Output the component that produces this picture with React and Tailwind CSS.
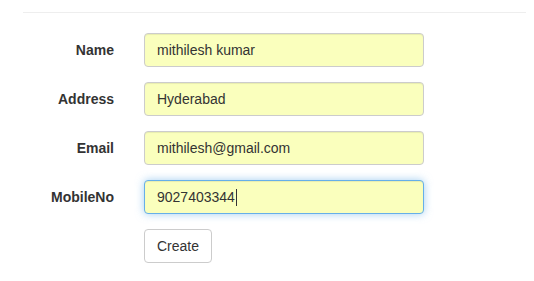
export default function App() {
  const fields = [
    { label: "Name", value: "mithilesh kumar" },
    { label: "Address", value: "Hyderabad" },
    { label: "Email", value: "mithilesh@gmail.com" },
  ];

  return (
    <div
      className="w-[534px] h-[281px] bg-white text-[14px] text-[#333] overflow-hidden"
      style={{ fontFamily: '"Liberation Sans", Arial, sans-serif' }}
    >
      <div className="pt-[12px] pl-[23px] pr-[8px]">
        <div className="border-t border-[#eee]" />
      </div>

      <form className="pt-[20px]">
        {fields.map((f) => (
          <div key={f.label} className="flex mb-[15px]">
            <label className="w-[114px] text-right font-bold pt-[7px] leading-[20px]">
              {f.label}
            </label>
            <div className="ml-[30px] w-[280px] h-[34px] rounded-[4px] border border-[#ccc] bg-[#faffbd] shadow-[inset_0_1px_1px_rgba(0,0,0,0.075)] px-[12px] py-[6px] leading-[20px] text-[#333]">
              {f.value}
            </div>
          </div>
        ))}

        <div className="flex mb-[15px]">
          <label className="w-[114px] text-right font-bold pt-[7px] leading-[20px]">
            MobileNo
          </label>
          <div className="ml-[30px] w-[280px] h-[34px] rounded-[4px] border border-[#66afe9] bg-[#faffbd] shadow-[inset_0_1px_1px_rgba(0,0,0,0.075),0_0_8px_rgba(102,175,233,0.6)] px-[12px] py-[6px] leading-[20px] text-[#333] flex items-center">
            <span>9027403344</span>
            <span className="inline-block w-px h-[17px] bg-[#333] ml-[1px]" />
          </div>
        </div>

        <div className="flex">
          <button
            type="button"
            className="ml-[144px] h-[34px] px-[12px] rounded-[4px] border border-[#ccc] bg-white text-[#333] leading-[20px]"
          >
            Create
          </button>
        </div>
      </form>
    </div>
  );
}
